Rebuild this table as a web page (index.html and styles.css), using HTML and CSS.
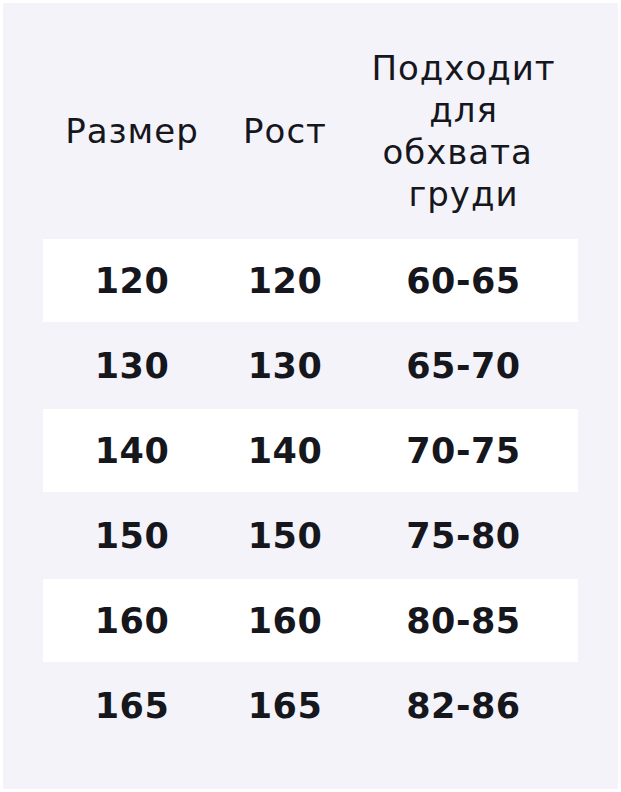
FILE: index.html
```html
<!DOCTYPE html>
<html lang="ru">
<head>
<meta charset="utf-8">
<link rel="stylesheet" href="styles.css">
</head>
<body>
<div class="panel">
  <div class="row head">
    <div class="cell">Размер</div>
    <div class="cell">Рост</div>
    <div class="cell">Подходит<br>для<br>обхвата&nbsp;<br>груди</div>
  </div>
  <div class="rows">
    <div class="row data odd"><div class="cell">120</div><div class="cell">120</div><div class="cell">60-65</div></div>
    <div class="row data"><div class="cell">130</div><div class="cell">130</div><div class="cell">65-70</div></div>
    <div class="row data odd"><div class="cell">140</div><div class="cell">140</div><div class="cell">70-75</div></div>
    <div class="row data"><div class="cell">150</div><div class="cell">150</div><div class="cell">75-80</div></div>
    <div class="row data odd"><div class="cell">160</div><div class="cell">160</div><div class="cell">80-85</div></div>
    <div class="row data"><div class="cell">165</div><div class="cell">165</div><div class="cell">82-86</div></div>
  </div>
</div>
</body>
</html>
```

FILE: styles.css
```css
html, body {
  margin: 0;
  padding: 0;
  background: #ffffff;
}
body {
  width: 621px;
  height: 792px;
  padding: 3px;
  box-sizing: border-box;
  font-family: "DejaVu Sans", sans-serif;
  color: #16161d;
}
.panel {
  width: 615px;
  height: 786px;
  background: #f4f3f9;
  box-sizing: border-box;
  padding: 44px 40px 0 40px;
}
.row {
  display: grid;
  grid-template-columns: 178px 128px 229px;
  align-items: center;
  text-align: center;
}
.head {
  height: 168px;
  margin-bottom: 24px;
  font-size: 34px;
  line-height: 42px;
  letter-spacing: 1px;
}
.rows {
  display: flex;
  flex-direction: column;
  gap: 2px;
}
.data {
  height: 83px;
  font-size: 35px;
  font-weight: bold;
  letter-spacing: 0.5px;
}
.odd {
  background: #ffffff;
}
```
